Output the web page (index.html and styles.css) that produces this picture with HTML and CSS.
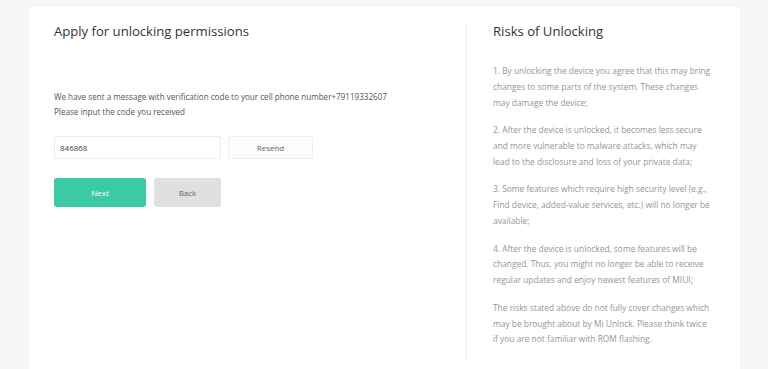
FILE: index.html
```html
<!DOCTYPE html>
<html lang="en">
<head>
    <meta charset="UTF-8">
    <meta name="viewport" content="width=device-width, initial-scale=1.0">
    <title>Mi Unlock</title>
    <link rel="stylesheet" href="styles.css">
</head>
<body>
    <div class="card">
        <div class="apply">
            <h2>Apply for unlocking permissions</h2>
            <p class="notice">We have sent a message with verification code to your cell phone number+79119332607<br>Please input the code you received</p>
            <div class="code-row">
                <input type="text" class="code" value="846868">
                <button type="button" class="resend">Resend</button>
            </div>
            <div class="actions">
                <button type="button" class="next">Next</button>
                <button type="button" class="back">Back</button>
            </div>
        </div>

        <div class="risks">
            <h2>Risks of Unlocking</h2>
            <p>1. By unlocking the device you agree that this may bring changes to some parts of the system. These changes may damage the device;</p>
            <p>2. After the device is unlocked, it becomes less secure and more vulnerable to malware attacks, which may lead to the disclosure and loss of your private data;</p>
            <p>3. Some features which require high security level (e.g., Find device, added-value services, etc.) will no longer be available;</p>
            <p>4. After the device is unlocked, some features will be changed. Thus, you might no longer be able to receive regular updates and enjoy newest features of MIUI;</p>
            <p>The risks stated above do not fully cover changes which may be brought about by Mi Unlock. Please think twice if you are not familiar with ROM flashing.</p>
        </div>
    </div>
</body>
</html>
```

FILE: styles.css
```css
body {
    font-family: "Open Sans", Arial, sans-serif;
    margin: 0;
    padding: 0;
    background: #f6f6f6;
}
.card {
    margin: 7px 28px 0 29px;
    background: #fff;
    display: flex;
    padding-top: 16px;
    height: 362px;
    box-sizing: border-box;
}
.apply {
    width: 412px;
    padding-left: 25px;
}
.apply h2,
.risks h2 {
    margin: 0;
    font-size: 13.1px;
    font-weight: 400;
    line-height: 16px;
    color: #333;
}
.notice {
    margin: 50px 0 0;
    font-size: 8.1px;
    line-height: 15px;
    color: #555;
}
.code-row {
    display: flex;
    gap: 7px;
    margin-top: 17px;
}
.code {
    width: 167px;
    height: 23px;
    box-sizing: border-box;
    border: 1px solid #ececec;
    border-radius: 2px;
    padding: 0 5px;
    font-family: inherit;
    font-size: 8px;
    color: #444;
    outline: none;
}
.resend {
    width: 85px;
    height: 23px;
    background: #fcfcfc;
    border: 1px solid #eee;
    border-radius: 2px;
    font-family: inherit;
    font-size: 8px;
    color: #666;
}
.actions {
    display: flex;
    gap: 8px;
    margin-top: 19px;
}
.actions button {
    height: 29px;
    border: none;
    border-radius: 3px;
    font-family: inherit;
    font-size: 8px;
    cursor: pointer;
}
.next {
    width: 92px;
    background: #3ccaa5;
    color: #fff;
}
.back {
    width: 67px;
    background: #e0e0e0;
    color: #666;
}
.risks {
    border-left: 1px solid #f0f0f0;
    padding-left: 26px;
    width: 217px;
    height: 337px;
}
.risks p {
    margin: 0;
    font-size: 8.4px;
    line-height: 15.8px;
    color: #959595;
}
.risks h2 + p {
    margin-top: 24px;
}
.risks p + p {
    margin-top: 11.8px;
}
```
